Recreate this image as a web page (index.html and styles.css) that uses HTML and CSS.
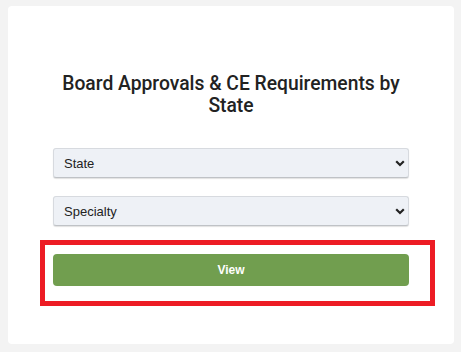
FILE: index.html
```html
<!DOCTYPE html>
<html>
<head>
<meta charset="utf-8">
<link rel="stylesheet" href="styles.css">
</head>
<body>
<div class="card">
  <h1 class="title">Board Approvals &amp; CE Requirements by State</h1>
  <form class="form">
    <div class="select-wrap">
      <select class="select"><option>State</option></select>
      <svg class="chev" width="10" height="7" viewBox="0 0 10 7"><path d="M1.2 1.3 L5 5 L8.8 1.3" fill="none" stroke="#222" stroke-width="2.2"/></svg>
    </div>
    <div class="select-wrap">
      <select class="select"><option>Specialty</option></select>
      <svg class="chev" width="10" height="7" viewBox="0 0 10 7"><path d="M1.2 1.3 L5 5 L8.8 1.3" fill="none" stroke="#222" stroke-width="2.2"/></svg>
    </div>
    <button type="button" class="btn">View</button>
  </form>
  <div class="highlight"></div>
</div>
</body>
</html>
```
FILE: styles.css
```css
html, body {
  margin: 0;
  padding: 0;
}
body {
  background: #f3f3f3;
  width: 461px;
  height: 352px;
  overflow: hidden;
}
.card {
  position: relative;
  box-sizing: border-box;
  margin: 6px 7px 0 8px;
  height: 338px;
  background: #fff;
  border-radius: 4px;
  padding-top: 67px;
}
.title {
  margin: 0 auto;
  width: 360px;
  text-align: center;
  font-family: Roboto, "Liberation Sans", sans-serif;
  font-weight: 500;
  font-size: 19.3px;
  line-height: 22px;
  color: #222;
}
.form {
  width: 356px;
  margin: 31px auto 0;
  display: flex;
  flex-direction: column;
}
.select-wrap {
  position: relative;
  height: 30px;
  margin-bottom: 18px;
}
.select-wrap + .select-wrap {
  margin-bottom: 28px;
}
.select {
  appearance: none;
  -webkit-appearance: none;
  box-sizing: border-box;
  width: 100%;
  height: 30px;
  margin: 0;
  padding: 0 10px;
  background: #eef1f6;
  border: 1px solid #d7dadf;
  border-bottom-color: #bfc2c6;
  border-radius: 3px;
  box-shadow: 0 1px 1px rgba(0,0,0,0.12);
  font-family: "Liberation Sans", Arial, sans-serif;
  font-size: 13px;
  color: #222;
}
.chev {
  position: absolute;
  right: 4px;
  top: 12px;
  pointer-events: none;
}
.btn {
  box-sizing: border-box;
  height: 32px;
  width: 100%;
  margin: 0;
  border: none;
  border-radius: 4px;
  background: #719e4f;
  color: #fff;
  font-family: "Liberation Sans", Arial, sans-serif;
  font-weight: bold;
  font-size: 12px;
}
.highlight {
  position: absolute;
  left: 32px;
  top: 234px;
  width: 395px;
  height: 66px;
  box-sizing: border-box;
  border: 5px solid #ed1c24;
  pointer-events: none;
}
```
